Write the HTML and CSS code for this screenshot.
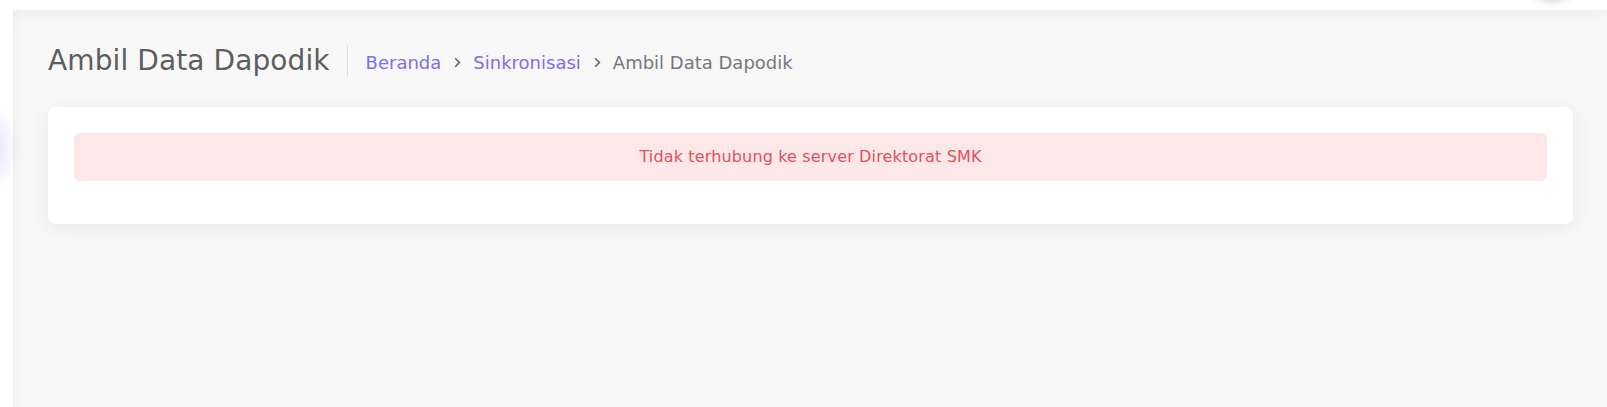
FILE: index.html
```html
<!DOCTYPE html>
<html lang="id">
<head>
<meta charset="utf-8">
<title>Ambil Data Dapodik</title>
<link rel="stylesheet" href="styles.css">
</head>
<body>
<div class="app">
  <aside class="sidebar"><span class="side-glow"></span></aside>
  <div class="wrap">
    <header class="topbar"><span class="avatar-shadow"></span></header>
    <main class="main">
      <div class="page-head">
        <h1 class="page-title">Ambil Data Dapodik</h1>
        <nav class="crumbs">
          <a class="crumb-link" href="#">Beranda</a>
          <svg class="chev" width="7" height="11" viewBox="0 0 7 11"><path d="M1.2 1.2 L5.4 5.5 L1.2 9.8" fill="none" stroke="#666" stroke-width="1.6"/></svg>
          <a class="crumb-link" href="#">Sinkronisasi</a>
          <svg class="chev" width="7" height="11" viewBox="0 0 7 11"><path d="M1.2 1.2 L5.4 5.5 L1.2 9.8" fill="none" stroke="#666" stroke-width="1.6"/></svg>
          <span class="crumb-current">Ambil Data Dapodik</span>
        </nav>
      </div>
      <section class="card">
        <div class="alert">Tidak terhubung ke server Direktorat SMK</div>
      </section>
    </main>
  </div>
</div>
</body>
</html>
```
FILE: styles.css
```css
* { box-sizing: border-box; }
html, body { margin: 0; height: 100%; }
body {
  font-family: "DejaVu Sans", "Noto Sans", sans-serif;
  background: #f8f8f8;
  overflow: hidden;
}
.app {
  display: flex;
  height: 407px;
}
.sidebar {
  position: relative;
  width: 13px;
  flex: 0 0 13px;
  background: #fff;
  z-index: 3;
}
.side-glow {
  position: absolute;
  left: -30px;
  top: 120px;
  width: 30px;
  height: 56px;
  border-radius: 50%;
  box-shadow: 0 0 18px 6px rgba(120, 100, 255, 0.2);
}
.wrap {
  flex: 1;
  display: flex;
  flex-direction: column;
  min-width: 0;
  position: relative;
}
.topbar {
  position: relative;
  height: 10px;
  background: #fff;
  margin-left: -13px;
  box-shadow: 0 0 24px rgba(0, 0, 0, 0.09);
  z-index: 2;
}
.avatar-shadow {
  position: absolute;
  left: 1530px;
  top: -44px;
  width: 44px;
  height: 44px;
  border-radius: 50%;
  background: #fff;
  box-shadow: 0 2px 8px rgba(0, 0, 0, 0.18);
}
.main {
  flex: 1;
  padding: 35px 34px 0 35px;
  background: #f8f8f8;
  box-shadow: inset 8px 0 12px -8px rgba(0, 0, 0, 0.05);
}
.page-head {
  display: flex;
  align-items: center;
  height: 32px;
  margin-bottom: 30px;
}
.page-title {
  margin: 0 17px 0 0;
  font-size: 28px;
  font-weight: 400;
  line-height: 32px;
  color: #5e5e5e;
  letter-spacing: 0.1px;
  white-space: nowrap;
}
.crumbs {
  display: flex;
  align-items: center;
  height: 32px;
  padding-left: 18px;
  border-left: 1px solid #dedede;
  font-size: 18px;
  line-height: 20px;
  padding-top: 3px;
  white-space: nowrap;
}
.crumb-link {
  color: #7b6ef3;
  text-decoration: none;
}
.crumb-current {
  color: #77767f;
}
.chev {
  display: block;
  margin: 0 12px 0 13px;
}
.card {
  background: #fff;
  border-radius: 8px;
  padding: 26px 26px 43px 26px;
  box-shadow: 0 4px 22px rgba(0, 0, 0, 0.07);
}
.alert {
  background: #fce8e9;
  color: #e4505b;
  border-radius: 6px;
  padding: 14px 16px;
  font-size: 16px;
  line-height: 20px;
  letter-spacing: 0.15px;
  text-align: center;
}
```
